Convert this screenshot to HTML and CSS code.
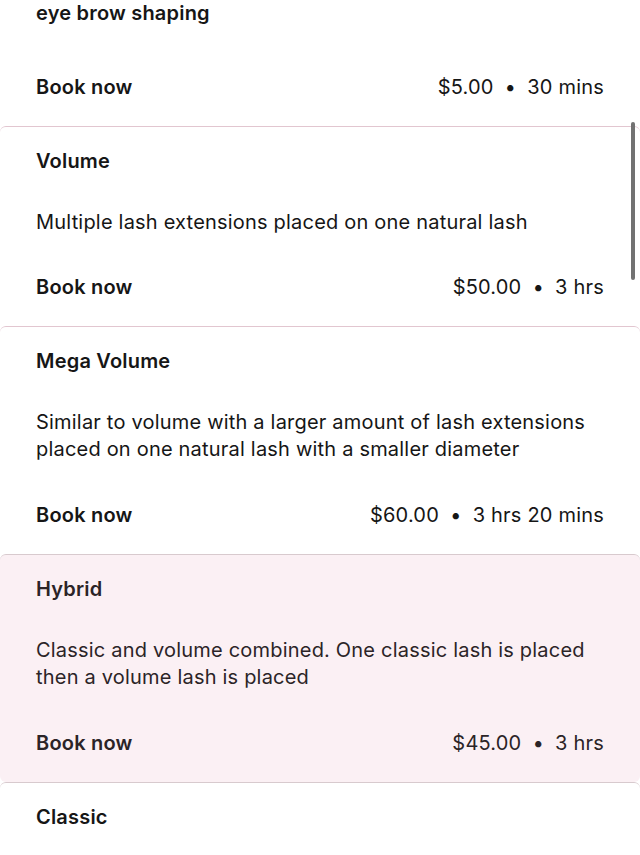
FILE: index.html
```html
<!DOCTYPE html>
<html>
<head>
    <meta charset="utf-8">
    <title>Services</title>

    <link rel="stylesheet" href="styles.css">
</head>
<body>
    <div class="services">
        <div class="service first">
            <div class="name">eye brow shaping</div>
            <div class="footer">
                <span class="book">Book now</span>
                <span class="meta">$5.00<span class="dot">•</span>30 mins</span>
            </div>
        </div>

        <div class="service">
            <div class="name">Volume</div>
            <div class="desc">Multiple lash extensions placed on one natural lash</div>
            <div class="footer">
                <span class="book">Book now</span>
                <span class="meta">$50.00<span class="dot">•</span>3 hrs</span>
            </div>
        </div>

        <div class="service">
            <div class="name">Mega Volume</div>
            <div class="desc two-lines">Similar to volume with a larger amount of lash extensions placed on one natural lash with a smaller diameter</div>
            <div class="footer">
                <span class="book">Book now</span>
                <span class="meta">$60.00<span class="dot">•</span>3 hrs 20 mins</span>
            </div>
        </div>

        <div class="service active">
            <div class="name">Hybrid</div>
            <div class="desc two-lines">Classic and volume combined. One classic lash is placed then a volume lash is placed</div>
            <div class="footer">
                <span class="book">Book now</span>
                <span class="meta">$45.00<span class="dot">•</span>3 hrs</span>
            </div>
        </div>

        <div class="service">
            <div class="name">Classic</div>
        </div>
    </div>

    <div class="scrollbar"></div>
</body>
</html>
```

FILE: styles.css
```css
body {
    margin: 0;
    background: #fff;
    color: #161616;
    font-family: Inter, "Liberation Sans", sans-serif;
    font-size: 20px;
    line-height: 27px;
    letter-spacing: 0.2px;
    overflow: hidden;
}

.services {
    margin-top: -21px;
}

.service {
    padding: 21px 36px 25px;
    border-top: 1px solid #e2c6d0;
    border-radius: 6px;
}

.service.first {
    border-top: none;
}

.service.active {
    background: #fbf0f4;
    color: #2b2427;
    border-top-color: #d8cace;
}

.service.active + .service {
    border-top-color: #d8cace;
}

.name {
    font-weight: 600;
}

.desc {
    margin-top: 34px;
}

.desc.two-lines {
    padding-bottom: 1px;
}

.footer {
    margin-top: 38px;
    display: flex;
    justify-content: space-between;
}

.first .footer {
    margin-top: 47px;
}

.book {
    font-weight: 600;
}

.dot {
    margin: 0 12px;
    font-weight: 700;
}

.scrollbar {
    position: absolute;
    top: 122px;
    right: 5px;
    width: 4px;
    height: 158px;
    border-radius: 2px;
    background: #727272;
}
```
